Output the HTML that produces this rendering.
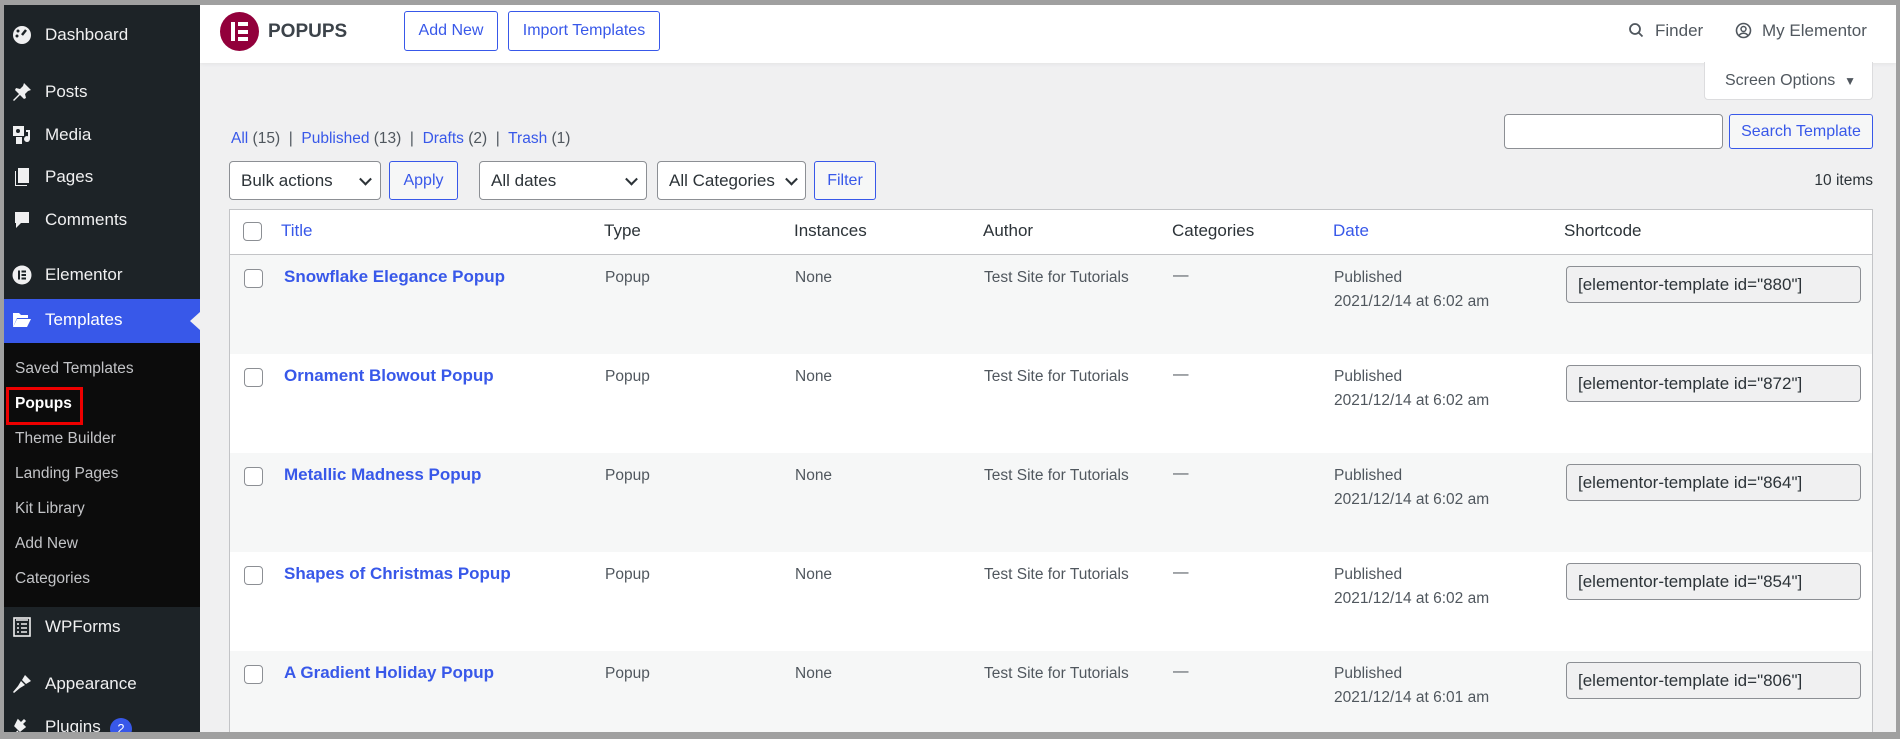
<!DOCTYPE html>
<html style="width:1900px;height:739px;overflow:hidden;background:#a0a0a0"><head><meta charset="utf-8"><style>
*{box-sizing:border-box;margin:0;padding:0}
body{width:1900px;height:739px;overflow:hidden;background:#a0a0a0;font-family:"Liberation Sans",sans-serif;position:relative;color:#1d2327}
.a{position:absolute;white-space:nowrap}
#main{position:absolute;left:4px;top:5px;width:1892px;height:727px;background:#f0f0f1;overflow:hidden}
#side{position:absolute;left:4px;top:5px;width:196px;height:727px;background:#1d2327;overflow:hidden}
.mi{position:absolute;left:0;width:196px;color:#f0f0f1;font-size:17px}
.mi .ic{position:absolute;left:8px;width:20px;height:20px}
.mi span.t{position:absolute;left:41px}
.sub{color:#c3c4c7;font-size:15.5px;position:absolute;left:11px}
.btn{position:absolute;border:1px solid #3858e9;border-radius:3px;color:#3858e9;font-size:16px;text-align:center;background:#f6f7f7}
.sel{position:absolute;border:1px solid #8c8f94;border-radius:4px;background:#fff;font-size:17px;color:#2c3338;padding-left:11px}
.chev{position:absolute;right:10px;top:50%;width:9px;height:9px;border-right:2px solid #2c3338;border-bottom:2px solid #2c3338;transform:translateY(-70%) rotate(45deg)}
.link{color:#3858e9}
.row{position:absolute;left:229px;width:1644px;height:99px;border-left:1px solid #c3c4c7;border-right:1px solid #c3c4c7}
.cb{position:absolute;width:19px;height:19px;border:1px solid #8c8f94;border-radius:4px;background:#fff}
.row .a{font-size:15.5px;color:#50575e}
.row .ttl{font-size:17px;font-weight:bold;color:#3858e9}
.sc{position:absolute;left:1336px;top:11px;width:295px;height:37px;border:1px solid #8c8f94;border-radius:4px;background:#f0f0f1;font-size:17px;color:#2c3338;padding:8px 0 0 11px;white-space:nowrap}
</style></head><body>
<div id="main">
<!-- rows placed inside main, clipped -->
</div>
<div class="a" style="left:4px;top:5px;width:1892px;height:727px;overflow:hidden">
<div style="position:absolute;left:-4px;top:-5px;width:1900px;height:739px">
<!-- header -->
<div class="a" style="left:200px;top:5px;width:1696px;height:58px;background:#fff;box-shadow:0 1px 4px rgba(0,0,0,.06)"></div>
<div class="a" style="left:220px;top:12px;width:39px;height:39px;border-radius:50%;background:#92003b"></div>
<div class="a" style="left:231px;top:22px;width:4px;height:19px;background:#fff"></div>
<div class="a" style="left:238px;top:22px;width:10px;height:4px;background:#fff"></div>
<div class="a" style="left:238px;top:29.5px;width:10px;height:4px;background:#fff"></div>
<div class="a" style="left:238px;top:37px;width:10px;height:4px;background:#fff"></div>
<div class="a" style="left:268px;top:21px;font-size:19px;font-weight:bold;color:#3c434a">POPUPS</div>
<div class="btn" style="left:404px;top:11px;width:94px;height:40px;line-height:38px;background:#fff">Add New</div>
<div class="btn" style="left:508px;top:11px;width:152px;height:40px;line-height:38px;background:#fff">Import Templates</div>
<svg class="a" style="left:1628px;top:22px" width="16" height="16" viewBox="0 0 16 16"><circle cx="7" cy="7" r="5" fill="none" stroke="#50575e" stroke-width="1.8"/><path d="M11 11l3.5 3.5" stroke="#50575e" stroke-width="1.8"/></svg>
<div class="a" style="left:1655px;top:21px;font-size:17px;color:#50575e">Finder</div>
<svg class="a" style="left:1735px;top:22px" width="17" height="17" viewBox="0 0 17 17"><circle cx="8.5" cy="8.5" r="7" fill="none" stroke="#50575e" stroke-width="1.6"/><circle cx="8.5" cy="7" r="2.5" fill="none" stroke="#50575e" stroke-width="1.5"/><path d="M4 13.5c2-3 7-3 9 0" fill="none" stroke="#50575e" stroke-width="1.5"/></svg>
<div class="a" style="left:1762px;top:21px;font-size:17px;color:#50575e">My Elementor</div>
<div class="a" style="left:1704px;top:62px;width:169px;height:38px;background:#fff;border:1px solid #dcdcde;border-top:none;border-radius:0 0 4px 4px;font-size:16px;color:#50575e;padding:10px 0 0 20px">Screen Options&nbsp;&nbsp;<span style="font-size:12px">▼</span></div>
<div class="a" style="left:231px;top:130px;font-size:15.5px;color:#50575e"><span class="link">All</span> (15) &nbsp;|&nbsp; <span class="link">Published</span> (13) &nbsp;|&nbsp; <span class="link">Drafts</span> (2) &nbsp;|&nbsp; <span class="link">Trash</span> (1)</div>
<div class="a" style="left:1504px;top:114px;width:219px;height:35px;border:1px solid #8c8f94;border-radius:4px;background:#fff"></div>
<div class="btn" style="left:1729px;top:114px;width:144px;height:35px;line-height:33px">Search Template</div>
<div class="sel" style="left:229px;top:161px;width:152px;height:39px;line-height:37px">Bulk actions<div class="chev"></div></div>
<div class="btn" style="left:389px;top:161px;width:69px;height:39px;line-height:37px">Apply</div>
<div class="sel" style="left:479px;top:161px;width:168px;height:39px;line-height:37px">All dates<div class="chev"></div></div>
<div class="sel" style="left:657px;top:161px;width:149px;height:39px;line-height:37px">All Categories<div class="chev" style="right:9px"></div></div>
<div class="btn" style="left:814px;top:161px;width:62px;height:39px;line-height:37px">Filter</div>
<div class="a" style="right:27px;top:172px;font-size:15.5px;color:#2c3338">10 items</div>
<div class="a" style="left:229px;top:209px;width:1644px;height:46px;background:#fff;border:1px solid #c3c4c7"></div>
<div class="cb" style="left:243px;top:222px"></div>
<div class="a link" style="left:281px;top:221px;font-size:17px">Title</div>
<div class="a" style="left:604px;top:221px;font-size:17px;color:#2c3338">Type</div>
<div class="a" style="left:794px;top:221px;font-size:17px;color:#2c3338">Instances</div>
<div class="a" style="left:983px;top:221px;font-size:17px;color:#2c3338">Author</div>
<div class="a" style="left:1172px;top:221px;font-size:17px;color:#2c3338">Categories</div>
<div class="a link" style="left:1333px;top:221px;font-size:17px">Date</div>
<div class="a" style="left:1564px;top:221px;font-size:17px;color:#2c3338">Shortcode</div>
<div class="row" style="top:255px;background:#f6f7f7">
<div class="cb" style="left:14px;top:14px"></div><div class="a ttl" style="left:54px;top:12px">Snowflake Elegance Popup</div>
<div class="a link" style="left:375px;top:14px">Popup</div><div class="a" style="left:565px;top:14px">None</div><div class="a link" style="left:754px;top:14px">Test Site for Tutorials</div><div class="a" style="left:943px;top:12px">—</div>
<div class="a" style="left:1104px;top:14px">Published</div><div class="a" style="left:1104px;top:38px">2021/12/14 at 6:02 am</div>
<div class="sc">[elementor-template id="880"]</div></div>
<div class="row" style="top:354px;background:#fff">
<div class="cb" style="left:14px;top:14px"></div><div class="a ttl" style="left:54px;top:12px">Ornament Blowout Popup</div>
<div class="a link" style="left:375px;top:14px">Popup</div><div class="a" style="left:565px;top:14px">None</div><div class="a link" style="left:754px;top:14px">Test Site for Tutorials</div><div class="a" style="left:943px;top:12px">—</div>
<div class="a" style="left:1104px;top:14px">Published</div><div class="a" style="left:1104px;top:38px">2021/12/14 at 6:02 am</div>
<div class="sc">[elementor-template id="872"]</div></div>
<div class="row" style="top:453px;background:#f6f7f7">
<div class="cb" style="left:14px;top:14px"></div><div class="a ttl" style="left:54px;top:12px">Metallic Madness Popup</div>
<div class="a link" style="left:375px;top:14px">Popup</div><div class="a" style="left:565px;top:14px">None</div><div class="a link" style="left:754px;top:14px">Test Site for Tutorials</div><div class="a" style="left:943px;top:12px">—</div>
<div class="a" style="left:1104px;top:14px">Published</div><div class="a" style="left:1104px;top:38px">2021/12/14 at 6:02 am</div>
<div class="sc">[elementor-template id="864"]</div></div>
<div class="row" style="top:552px;background:#fff">
<div class="cb" style="left:14px;top:14px"></div><div class="a ttl" style="left:54px;top:12px">Shapes of Christmas Popup</div>
<div class="a link" style="left:375px;top:14px">Popup</div><div class="a" style="left:565px;top:14px">None</div><div class="a link" style="left:754px;top:14px">Test Site for Tutorials</div><div class="a" style="left:943px;top:12px">—</div>
<div class="a" style="left:1104px;top:14px">Published</div><div class="a" style="left:1104px;top:38px">2021/12/14 at 6:02 am</div>
<div class="sc">[elementor-template id="854"]</div></div>
<div class="row" style="top:651px;height:81px;background:#f6f7f7">
<div class="cb" style="left:14px;top:14px"></div><div class="a ttl" style="left:54px;top:12px">A Gradient Holiday Popup</div>
<div class="a link" style="left:375px;top:14px">Popup</div><div class="a" style="left:565px;top:14px">None</div><div class="a link" style="left:754px;top:14px">Test Site for Tutorials</div><div class="a" style="left:943px;top:12px">—</div>
<div class="a" style="left:1104px;top:14px">Published</div><div class="a" style="left:1104px;top:38px">2021/12/14 at 6:01 am</div>
<div class="sc">[elementor-template id="806"]</div></div>
</div></div>
<div id="side">
<div class="mi" style="top:20px"><svg class="ic" viewBox="0 0 20 20"><circle cx="10" cy="10" r="9" fill="#f0f0f1"/><path d="M10 10l4-5" stroke="#1d2327" stroke-width="2.5"/><circle cx="5" cy="11" r="1.5" fill="#1d2327"/><circle cx="6" cy="6" r="1.5" fill="#1d2327"/></svg><span class="t">Dashboard</span></div>
<div class="mi" style="top:77px"><svg class="ic" viewBox="0 0 20 20"><path d="M12 1l7 7-3 1-3 3 1 4-2 1-4-4-6 6-1-1 6-6-4-4 1-2 4 1 3-3z" fill="#f0f0f1"/></svg><span class="t">Posts</span></div>
<div class="mi" style="top:120px"><svg class="ic" viewBox="0 0 20 20"><rect x="1" y="1" width="11" height="10" fill="#f0f0f1"/><circle cx="6" cy="6" r="2" fill="#1d2327"/><path d="M14 5h4v9a3 3 0 1 1-2-2.8V7h-2z" fill="#f0f0f1"/><rect x="4" y="12" width="6" height="7" fill="#f0f0f1"/></svg><span class="t">Media</span></div>
<div class="mi" style="top:162px"><svg class="ic" viewBox="0 0 20 20"><rect x="6" y="1" width="11" height="15" fill="#f0f0f1"/><path d="M3 4v15h12v-1H4V4z" fill="#f0f0f1"/></svg><span class="t">Pages</span></div>
<div class="mi" style="top:205px"><svg class="ic" viewBox="0 0 20 20"><path d="M3 2h14v11H9l-5 5v-5H3z" fill="#f0f0f1"/></svg><span class="t">Comments</span></div>
<div class="mi" style="top:260px"><svg class="ic" viewBox="0 0 20 20"><circle cx="10" cy="10" r="9.5" fill="#f0f0f1"/><rect x="6" y="5.5" width="2" height="9" fill="#1d2327"/><rect x="9.5" y="5.5" width="4.5" height="2" fill="#1d2327"/><rect x="9.5" y="9" width="4.5" height="2" fill="#1d2327"/><rect x="9.5" y="12.5" width="4.5" height="2" fill="#1d2327"/></svg><span class="t">Elementor</span></div>
<div class="a" style="left:0;top:294px;width:196px;height:44px;background:#3858e9"></div>
<div class="a" style="left:186px;top:307px;width:0;height:0;border-top:9px solid transparent;border-bottom:9px solid transparent;border-right:10px solid #f0f0f1"></div>
<div class="mi" style="top:305px;color:#fff"><svg class="ic" viewBox="0 0 20 20"><path d="M1 3h6l2 2h7v3H5l-4 9z" fill="#fff"/><path d="M5 9h14l-4 8H1z" fill="#fff"/></svg><span class="t">Templates</span></div>
<div class="a" style="left:0;top:338px;width:196px;height:264px;background:#0c0c0c"></div>
<div class="sub" style="top:355px">Saved Templates</div>
<div class="a" style="left:2px;top:382px;width:77px;height:38px;border:3px solid #e00"></div>
<div class="sub" style="top:390px;color:#fff;font-weight:bold">Popups</div>
<div class="sub" style="top:425px">Theme Builder</div>
<div class="sub" style="top:460px">Landing Pages</div>
<div class="sub" style="top:495px">Kit Library</div>
<div class="sub" style="top:530px">Add New</div>
<div class="sub" style="top:565px">Categories</div>
<div class="mi" style="top:612px"><svg class="ic" viewBox="0 0 20 20"><rect x="2" y="1" width="16" height="18" fill="none" stroke="#f0f0f1" stroke-width="1.6"/><path d="M5 7h2M9 7h6M5 11h2M9 11h6M5 15h2M9 15h6M4 3h12" stroke="#f0f0f1" stroke-width="1.4"/></svg><span class="t">WPForms</span></div>
<div class="mi" style="top:669px"><svg class="ic" viewBox="0 0 20 20"><path d="M13 1l6 6-5 3-4-4z" fill="#f0f0f1"/><path d="M9 7l4 4-5 3-6 5-1-1 5-6z" fill="#f0f0f1"/></svg><span class="t">Appearance</span></div>
<div class="mi" style="top:712px"><svg class="ic" viewBox="0 0 20 20"><path d="M6 3l3 3 3-3 1 1-3 3 3 3-5 4-5-5z M2 18l4-4" fill="#f0f0f1" stroke="#f0f0f1" stroke-width="1.5"/></svg><span class="t">Plugins</span><span class="a" style="left:106px;top:1px;width:22px;height:22px;border-radius:50%;background:#3858e9;font-size:13px;text-align:center;line-height:22px;color:#fff">2</span></div>
</div>
<div class="a" style="left:0;top:732px;width:1900px;height:40px;background:#a0a0a0"></div>
</body></html>
